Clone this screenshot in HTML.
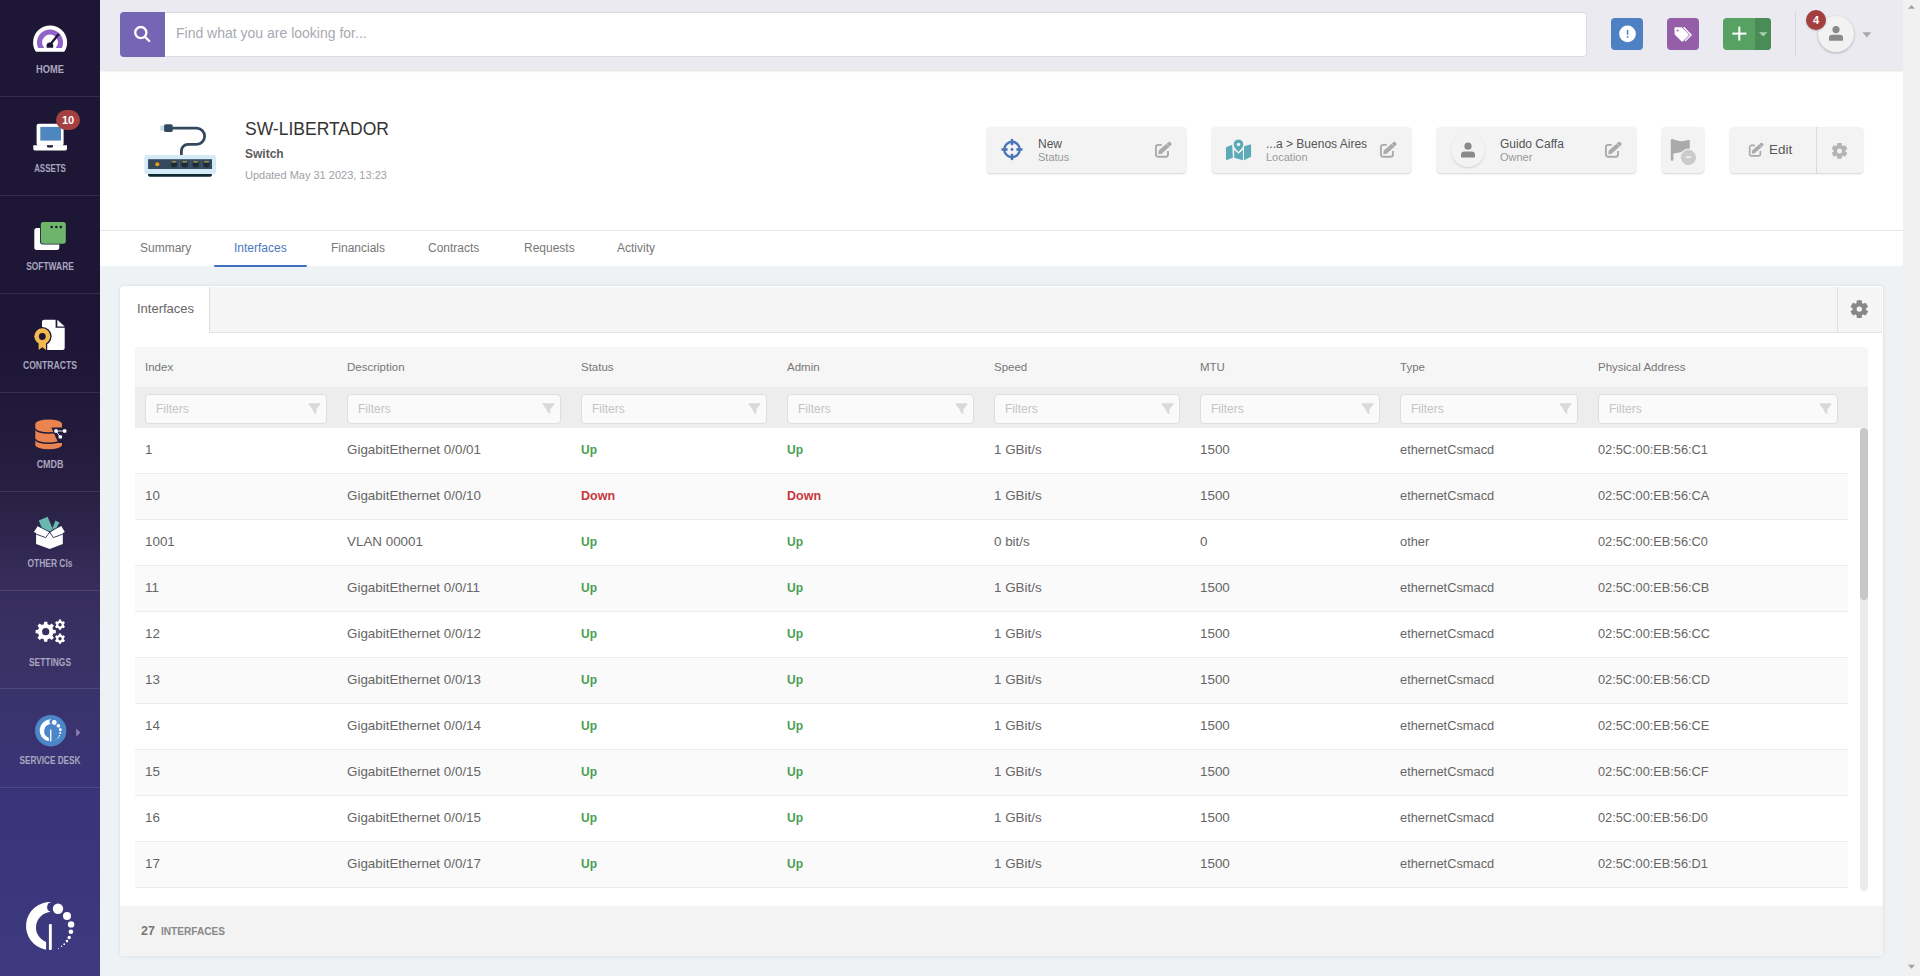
<!DOCTYPE html>
<html><head><meta charset="utf-8"><title>SW-LIBERTADOR</title>
<style>
*{box-sizing:border-box;margin:0;padding:0}
html,body{width:1920px;height:976px;overflow:hidden;background:#eef2f5;font-family:"Liberation Sans",sans-serif;position:relative}
.a{position:absolute}
/* sidebar */
#sb{left:0;top:0;width:100px;height:976px;background:linear-gradient(180deg,#1d1634 0%,#1e1636 36%,#211a3a 43%,#281f42 50%,#362d5c 60%,#3a3266 68%,#3a347a 82%,#3d3a80 100%)}
.sep{left:0;width:100px;height:1px;background:rgba(255,255,255,.1)}
.lbl{left:0;width:100px;text-align:center;font-weight:bold;font-size:10px;color:#a9a6bf;line-height:10px;white-space:nowrap}
/* topbar */
#tb{left:100px;top:0;width:1803px;height:70px;background:#ebeaf0;box-shadow:0 1px 2px rgba(0,0,0,.13);z-index:2}
#vs{left:1903px;top:0;width:17px;height:976px;background:#f1f1f1;z-index:3}
#hdr{left:100px;top:70px;width:1803px;height:160px;background:#fff}
#tabs{left:100px;top:230px;width:1803px;height:36px;background:#fff;border-top:1px solid #e6e6e6}
.tab{top:10px;font-size:12px;color:#777;white-space:nowrap;line-height:14px}
.ic{background:#f3f3f3;border-radius:4px;box-shadow:0 1px 2px rgba(0,0,0,.18)}
.t1{font-size:12px;color:#555;white-space:nowrap;line-height:14px}
.t2{font-size:11px;color:#999;white-space:nowrap;line-height:13px}
/* card */
#card{left:120px;top:286px;width:1763px;height:670px;background:#fff;border-radius:3px;box-shadow:0 0 2px rgba(0,0,0,.2)}
.th{font-size:11.5px;color:#777;white-space:nowrap;line-height:14px}
.flt{height:30px;top:394px;background:#fafafa;border:1px solid #dedede;border-radius:4px}
.flt span{position:absolute;left:10px;top:7px;font-size:12px;color:#c4c4c4}
.flt i{position:absolute;right:5px;top:8px;width:13px;height:11px;line-height:0}
.row{left:135px;width:1713px;height:46px;border-bottom:1px solid #ececec}
.row div{position:absolute;top:14px;font-size:13.4px;color:#666;white-space:nowrap;line-height:16px}
.row .up{color:#4a9e52;font-weight:bold;font-size:12px}
.row .dn{color:#c9363e;font-weight:bold;font-size:12.5px}
</style></head><body>

<!-- SIDEBAR -->
<div id="sb" class="a">
<svg class="a" style="left:0;top:0" width="100" height="976" viewBox="0 0 100 976"><path d="M36.25,50.9 A16.2,16.2 0 1 1 63.95,50.9 Z" fill="#fff" stroke="#fff" stroke-width="1.6" stroke-linejoin="round"/><clipPath id="hc"><rect x="0" y="0" width="100" height="48"/></clipPath><circle cx="50" cy="42.5" r="10.5" fill="none" stroke="#9162c8" stroke-width="5.1" clip-path="url(#hc)"/><line x1="49.6" y1="45.2" x2="58.4" y2="34.6" stroke="#1d1634" stroke-width="2.3" stroke-linecap="round"/><path d="M46.6,47.8 V45.6 A3.3,3.1 0 0 1 53.2,45.6 V47.8 Z" fill="#1d1634"/><rect x="36.6" y="123.7" width="27" height="22" rx="2" fill="#fff"/><rect x="40.3" y="126.9" width="20.7" height="13.7" fill="#4e86c0"/><path d="M33.3,145.2 H67 V148.4 A2.2,2.2 0 0 1 64.8,150.6 H35.5 A2.2,2.2 0 0 1 33.3,148.4 Z" fill="#fff"/><path d="M47,145.2 H53 V146.2 A1.2,1.2 0 0 1 51.8,147.4 H48.2 A1.2,1.2 0 0 1 47,146.2 Z" fill="#1d1634"/><rect x="34.3" y="228" width="25" height="22" rx="2.5" fill="#fff"/><rect x="40" y="221.3" width="26.4" height="23.1" rx="3" fill="#1d1634"/><rect x="40.8" y="222" width="25" height="21.7" rx="2.5" fill="#6cb56a"/><circle cx="51.7" cy="227" r="1.25" fill="#1d1634"/><circle cx="56.3" cy="227" r="1.25" fill="#1d1634"/><circle cx="60.8" cy="227" r="1.25" fill="#1d1634"/><path d="M44,319.7 H55.6 V327.8 H64.7 V348 A2,2 0 0 1 62.7,350 H44 A2,2 0 0 1 42,348 V321.7 A2,2 0 0 1 44,319.7 Z" fill="#fff"/><path d="M57.3,319.7 L64.7,326.4 H57.3 Z" fill="#fff"/><circle cx="42.3" cy="336.3" r="9.3" fill="#1d1634"/><path d="M37.6,340 H47.2 V351 H37.6 Z" fill="#1d1634"/><path d="M38.6,341 H46 V350 L42.3,347.2 L38.6,350 Z" fill="#f2b94f"/><circle cx="42.3" cy="336.3" r="8" fill="#f2b94f"/><circle cx="42.3" cy="336.5" r="3.4" fill="#1d1634"/><path d="M35.3,424 A13.35,4.6 0 0 1 62,424 V444.8 A13.35,4.5 0 0 1 35.3,444.8 Z" fill="#e9834f"/><path d="M35.3,428.8 A13.35,4.2 0 0 0 62,428.8" fill="none" stroke="#221a3c" stroke-width="1.4"/><path d="M35.3,439 A13.35,4.2 0 0 0 62,439" fill="none" stroke="#221a3c" stroke-width="1.4"/><path d="M51.3,427.6 H66 V443 H58.4 Z" fill="#221a3c"/><rect x="54.3" y="429.3" width="3.4" height="3.4" rx="0.8" fill="#fff"/><rect x="63" y="429.3" width="3.4" height="3.4" rx="0.8" fill="#fff"/><rect x="58.6" y="435.2" width="3.4" height="3.4" rx="0.8" fill="#fff"/><path d="M56,431 H64.7 M56,431 L60.3,437" stroke="#fff" stroke-width="0.9"/><path d="M38.8,520.4 L47.6,516.7 L53.2,530 L44,533.5 Z" fill="#6bb8b0"/><path d="M55.4,520.4 L59.5,522.5 L55,531 L52.6,527.8 Z" fill="#6bb8b0"/><path d="M36.1,533 H62.8 V544 L49.7,549.1 L36.1,544 Z" fill="#fff"/><path d="M33.9,532.1 L37.8,526.1 L49.3,532.1 L45.6,537.6 Z" fill="#fff"/><path d="M64.8,532.1 L61.1,525.7 L50.1,532.1 L53.4,537.6 Z" fill="#fff"/><path d="M36.1,534.1 L45.6,537.6 L49.7,532.2 L53.4,537.6 L62.8,534.1" fill="none" stroke="#2b2249" stroke-width="0.9"/><path d="M37.8,525.9 L49.7,531.9 L61.1,525.5" fill="none" stroke="#2b2249" stroke-width="0.8"/><path d="M43.80,624.13 L44.10,621.63 L47.30,621.63 L47.60,624.13 L49.71,625.01 L51.70,623.45 L53.95,625.70 L52.39,627.69 L53.27,629.80 L55.77,630.10 L55.77,633.30 L53.27,633.60 L52.39,635.71 L53.95,637.70 L51.70,639.95 L49.71,638.39 L47.60,639.27 L47.30,641.77 L44.10,641.77 L43.80,639.27 L41.69,638.39 L39.70,639.95 L37.45,637.70 L39.01,635.71 L38.13,633.60 L35.63,633.30 L35.63,630.10 L38.13,629.80 L39.01,627.69 L37.45,625.70 L39.70,623.45 L41.69,625.01Z M42.10,631.70 a3.6,3.6 0 1 0 7.20,0 a3.6,3.6 0 1 0 -7.20,0Z" fill="#fff" fill-rule="evenodd"/><path d="M58.75,621.01 L58.92,619.61 L61.08,619.61 L61.25,621.01 L62.57,621.77 L63.86,621.22 L64.95,623.09 L63.83,623.94 L63.83,625.46 L64.95,626.31 L63.86,628.18 L62.57,627.63 L61.25,628.39 L61.08,629.79 L58.92,629.79 L58.75,628.39 L57.43,627.63 L56.14,628.18 L55.05,626.31 L56.17,625.46 L56.17,623.94 L55.05,623.09 L56.14,621.22 L57.43,621.77Z M58.30,624.70 a1.7,1.7 0 1 0 3.40,0 a1.7,1.7 0 1 0 -3.40,0Z" fill="#fff" fill-rule="evenodd"/><path d="M58.75,635.01 L58.92,633.61 L61.08,633.61 L61.25,635.01 L62.57,635.77 L63.86,635.22 L64.95,637.09 L63.83,637.94 L63.83,639.46 L64.95,640.31 L63.86,642.18 L62.57,641.63 L61.25,642.39 L61.08,643.79 L58.92,643.79 L58.75,642.39 L57.43,641.63 L56.14,642.18 L55.05,640.31 L56.17,639.46 L56.17,637.94 L55.05,637.09 L56.14,635.22 L57.43,635.77Z M58.30,638.70 a1.7,1.7 0 1 0 3.40,0 a1.7,1.7 0 1 0 -3.40,0Z" fill="#fff" fill-rule="evenodd"/><circle cx="50.7" cy="730.7" r="15.7" fill="#4a86c8"/><path d="M51.43,719.39 A11.04,11.04 0 0 0 48.81,741.29 L48.81,737.77 A7.13,7.13 0 0 1 50.92,723.97 A2.35,2.35 0 0 1 51.43,719.39 Z" fill="#fff"/><rect x="50.09" y="729.53" width="1.33" height="11.87" rx="0.46" fill="#fff"/><circle cx="54.28" cy="722.49" r="2.39" fill="#fff"/><circle cx="58.42" cy="725.75" r="1.84" fill="#fff"/><circle cx="60.31" cy="729.66" r="1.47" fill="#fff"/><circle cx="60.21" cy="733.02" r="1.06" fill="#fff"/><circle cx="59.43" cy="735.69" r="0.78" fill="#fff"/><circle cx="58.42" cy="737.35" r="0.60" fill="#fff"/><circle cx="57.13" cy="738.77" r="0.41" fill="#fff"/><circle cx="55.94" cy="739.74" r="0.32" fill="#fff"/><circle cx="54.46" cy="740.75" r="0.23" fill="#fff"/><path d="M76.2,728.4 L80.4,732.6 L76.2,736.8 Z" fill="#8a84b0"/><path d="M51.80,902.07 A24.00,24.00 0 0 0 46.10,949.68 L46.10,942.03 A15.50,15.50 0 0 1 50.70,912.02 A5.10,5.10 0 0 1 51.80,902.07 Z" fill="#fff"/><rect x="48.90" y="924.10" width="2.90" height="25.80" rx="1.00" fill="#fff"/><circle cx="58.00" cy="908.80" r="5.20" fill="#fff"/><circle cx="67.00" cy="915.90" r="4.00" fill="#fff"/><circle cx="71.10" cy="924.40" r="3.20" fill="#fff"/><circle cx="70.90" cy="931.70" r="2.30" fill="#fff"/><circle cx="69.20" cy="937.50" r="1.70" fill="#fff"/><circle cx="67.00" cy="941.10" r="1.30" fill="#fff"/><circle cx="64.20" cy="944.20" r="0.90" fill="#fff"/><circle cx="61.60" cy="946.30" r="0.70" fill="#fff"/><circle cx="58.40" cy="948.50" r="0.50" fill="#fff"/></svg>
<div class="a sep" style="top:96px"></div><div class="a sep" style="top:195px"></div><div class="a sep" style="top:293px"></div><div class="a sep" style="top:392px"></div><div class="a sep" style="top:491px"></div><div class="a sep" style="top:590px"></div><div class="a sep" style="top:688px"></div><div class="a sep" style="top:787px"></div>
<div class="a lbl" style="top:65.0px;transform:scaleX(0.933)">HOME</div><div class="a lbl" style="top:164.0px;transform:scaleX(0.792)">ASSETS</div><div class="a lbl" style="top:262.0px;transform:scaleX(0.841)">SOFTWARE</div><div class="a lbl" style="top:361.0px;transform:scaleX(0.863)">CONTRACTS</div><div class="a lbl" style="top:460.0px;transform:scaleX(0.890)">CMDB</div><div class="a lbl" style="top:559.0px;transform:scaleX(0.844)">OTHER CIs</div><div class="a lbl" style="top:658.0px;transform:scaleX(0.840)">SETTINGS</div><div class="a lbl" style="top:756.0px;transform:scaleX(0.819)">SERVICE DESK</div>
<div class="a" style="left:56px;top:110px;width:24px;height:20px;border-radius:10px;background:#a4403f;color:#fff;font-weight:bold;font-size:11px;line-height:20px;text-align:center">10</div>
</div>

<!-- TOP BAR -->
<div id="tb" class="a">
<div class="a" style="left:20px;top:12px;width:45px;height:45px;background:#7566b5;border-radius:4px 0 0 4px"></div>
<svg class="a" style="left:33px;top:25px" width="19" height="18" viewBox="0 0 19 18"><circle cx="7.8" cy="7.6" r="5.6" fill="none" stroke="#fff" stroke-width="2.3"/><line x1="11.8" y1="11.6" x2="16.2" y2="16" stroke="#fff" stroke-width="2.4" stroke-linecap="round"/></svg>
<div class="a" style="left:65px;top:12px;width:1422px;height:45px;background:#fff;border:1px solid #dcdce0;border-left:none;border-radius:0 4px 4px 0"></div>
<div class="a" style="left:76px;top:25px;font-size:14px;color:#a9a9b1;white-space:nowrap;line-height:16px">Find what you are looking for...</div>
<div class="a" style="left:1511px;top:18px;width:32px;height:32px;background:#4e81c4;border-radius:4px"></div>
<svg class="a" style="left:1511px;top:18px" width="32" height="32" viewBox="0 0 32 32"><circle cx="16.5" cy="15.9" r="8.3" fill="#fff"/><rect x="15.8" y="12" width="1.5" height="4.9" fill="#4e81c4"/><rect x="15.8" y="18" width="1.5" height="1.8" fill="#4e81c4"/></svg>
<div class="a" style="left:1567px;top:18px;width:32px;height:32px;background:#955ea8;border-radius:4px"></div>
<svg class="a" style="left:1567px;top:19px" width="32" height="32" viewBox="0 0 32 32"><path d="M7.4,9.5 A1.2,1.2 0 0 1 8.6,8.3 H14.6 L21.4,15.1 A1.2,1.2 0 0 1 21.4,16.8 L16,22.2 A1.2,1.2 0 0 1 14.3,22.2 L7.7,15.6 Z" fill="#fff"/><circle cx="10.6" cy="11.4" r="1" fill="#955ea8"/><path d="M16.6,8.3 L24,15.9 L18,22" fill="none" stroke="#fff" stroke-width="1.4"/></svg>
<div class="a" style="left:1623px;top:18px;width:48px;height:32px;background:#57a263;border-radius:4px;overflow:hidden"><div class="a" style="left:32px;top:0;width:16px;height:32px;background:#4a8c55"></div></div>
<svg class="a" style="left:1623px;top:18px" width="48" height="32" viewBox="0 0 48 32"><rect x="9.3" y="14.6" width="14" height="2" fill="#fff"/><rect x="15.3" y="8.6" width="2" height="14" fill="#fff"/><path d="M36,14.2 H44.4 L40.2,18.6 Z" fill="#a8d0b0"/></svg>
<div class="a" style="left:1695px;top:12px;width:1px;height:44px;background:#d6d6dc"></div>
<div class="a" style="left:1718px;top:16px;width:36px;height:36px;border-radius:50%;background:#f2f2f2;box-shadow:0 1px 3px rgba(0,0,0,.25)"></div>
<svg class="a" style="left:1718px;top:16px" width="36" height="36" viewBox="0 0 36 36"><circle cx="18" cy="13.6" r="3.6" fill="#8a8a8a"/><path d="M11,22 A3.2,3.2 0 0 1 14.2,18.8 H21.8 A3.2,3.2 0 0 1 25,22 V24.8 H11 Z" fill="#8a8a8a"/></svg>
<div class="a" style="left:1706px;top:10px;width:20px;height:20px;border-radius:50%;background:#a53f3f;color:#fff;font-weight:bold;font-size:11px;line-height:20px;text-align:center;box-shadow:0 1px 2px rgba(0,0,0,.2)">4</div>
<svg class="a" style="left:1760px;top:30px" width="14" height="10" viewBox="0 0 14 10"><path d="M2.5,2.2 H11.3 L6.9,7.4 Z" fill="#aaa"/></svg>
</div>
<div id="vs" class="a"><svg class="a" style="left:0;top:0" width="17" height="976" viewBox="0 0 17 976"><path d="M4.9,8.8 L8.5,4.9 L12,8.8 Z" fill="#a3a3a3"/><path d="M4.9,964.8 L12,964.8 L8.5,968.8 Z" fill="#a3a3a3"/></svg></div>

<!-- HEADER -->
<div id="hdr" class="a">
<svg class="a" style="left:35px;top:40px" width="90" height="70" viewBox="135 110 90 70">
<path d="M172,128.2 H196.5 A8.1,8.1 0 0 1 196.5,144.4 H188 A6.6,6.6 0 0 0 181.4,151 V156" fill="none" stroke="#34495e" stroke-width="2.8"/>
<rect x="160.3" y="125.6" width="5" height="5" fill="#c2dcea"/>
<rect x="164.1" y="124.3" width="8.6" height="7.8" rx="1.5" fill="#34495e"/>
<rect x="148" y="172.5" width="64" height="4.3" rx="2" fill="#0f2a33"/>
<rect x="144.4" y="155.1" width="71.7" height="18.8" rx="2.5" fill="#d4ebf7"/>
<rect x="148.1" y="159.2" width="63.9" height="9.8" fill="#34495e"/>
<circle cx="157.3" cy="164.3" r="2" fill="#f0a30a"/>
<g fill="#1c2b36"><path d="M171,161.3 H177 V165.8 L175.5,167.3 H172.5 L171,165.8 Z"/><path d="M181.7,161.3 H187.7 V165.8 L186.2,167.3 H183.2 L181.7,165.8 Z"/><path d="M192.7,161.3 H198.7 V165.8 L197.2,167.3 H194.2 L192.7,165.8 Z"/><path d="M203.5,161.3 H209.5 V165.8 L208,167.3 H205 L203.5,165.8 Z"/></g>
<g fill="#b5a45a"><rect x="171.6" y="161.2" width="4.8" height="1.3"/><rect x="182.3" y="161.2" width="4.8" height="1.3"/><rect x="193.3" y="161.2" width="4.8" height="1.3"/><rect x="204.1" y="161.2" width="4.8" height="1.3"/></g>
<g fill="#4d6275"><rect x="179.2" y="160.5" width="0.7" height="8"/><rect x="190.2" y="160.5" width="0.7" height="8"/><rect x="201" y="160.5" width="0.7" height="8"/></g>
</svg>
<div class="a" style="left:145px;top:49px;font-size:17.5px;color:#333;white-space:nowrap;line-height:20px">SW-LIBERTADOR</div>
<div class="a" style="left:145px;top:77px;font-size:12px;font-weight:bold;color:#5c5c5c;white-space:nowrap;line-height:14px">Switch</div>
<div class="a" style="left:145px;top:99px;font-size:11px;color:#a0a0a8;white-space:nowrap;line-height:13px">Updated May 31 2023, 13:23</div>

<div class="a ic" style="left:887px;top:57px;width:199px;height:46px"></div>
<svg class="a" style="left:900px;top:67px" width="24" height="24" viewBox="0 0 24 24"><circle cx="12" cy="12.5" r="7.7" fill="none" stroke="#4d76b8" stroke-width="2.4"/><g stroke="#4d76b8" stroke-width="2.5"><line x1="12" y1="1.9" x2="12" y2="8.2"/><line x1="12" y1="16.8" x2="12" y2="23.1"/><line x1="1.4" y1="12.5" x2="7.7" y2="12.5"/><line x1="16.3" y1="12.5" x2="22.6" y2="12.5"/></g><circle cx="12" cy="12.5" r="1.4" fill="#4d76b8"/></svg>
<div class="a t1" style="left:938px;top:67px">New</div>
<div class="a t2" style="left:938px;top:81px">Status</div>
<svg class="a" style="left:1054px;top:71px" width="18" height="17" viewBox="0 0 18 17"><path d="M7.8,3.9 H4.1 A2.2,2.2 0 0 0 1.9,6.1 V13.6 A2.2,2.2 0 0 0 4.1,15.8 H11.8 A2.2,2.2 0 0 0 14,13.6 V10" fill="none" stroke="#aaa" stroke-width="1.9"/><path d="M4.3,13.2 L4.77,9.6 L13.97,1.4 A2.15,2.15 0 0 1 16.83,4.6 L7.63,12.8 Z" fill="#aaa"/><line x1="12.5" y1="2.4" x2="15.6" y2="5.96" stroke="#f3f3f3" stroke-width="0.5"/></svg>
<div class="a ic" style="left:1112px;top:57px;width:199px;height:46px"></div>
<svg class="a" style="left:1125px;top:68px" width="28" height="24" viewBox="0 0 28 24"><g fill="#5aaab8"><path d="M1,9.2 L7.2,6.8 L7.9,19.8 L1,22.2 Z"/><path d="M9.2,12 L13.5,15.7 L17.9,12 V22.2 L9.2,19.7 Z"/><path d="M19,8.3 L26.1,6.2 V18.8 L19,22.2 Z"/></g><path d="M13.5,0.9 A5.4,5.4 0 0 1 18.9,6.3 C18.9,9.3 15.8,12.6 13.5,14.6 C11.2,12.6 8.1,9.3 8.1,6.3 A5.4,5.4 0 0 1 13.5,0.9 Z" fill="#5aaab8" stroke="#f3f3f3" stroke-width="1.1"/><circle cx="13.5" cy="6.4" r="1.7" fill="#f3f3f3"/></svg>
<div class="a t1" style="left:1166px;top:67px">...a &gt; Buenos Aires</div>
<div class="a t2" style="left:1166px;top:81px">Location</div>
<svg class="a" style="left:1279px;top:71px" width="18" height="17" viewBox="0 0 18 17"><path d="M7.8,3.9 H4.1 A2.2,2.2 0 0 0 1.9,6.1 V13.6 A2.2,2.2 0 0 0 4.1,15.8 H11.8 A2.2,2.2 0 0 0 14,13.6 V10" fill="none" stroke="#aaa" stroke-width="1.9"/><path d="M4.3,13.2 L4.77,9.6 L13.97,1.4 A2.15,2.15 0 0 1 16.83,4.6 L7.63,12.8 Z" fill="#aaa"/><line x1="12.5" y1="2.4" x2="15.6" y2="5.96" stroke="#f3f3f3" stroke-width="0.5"/></svg>
<div class="a ic" style="left:1337px;top:57px;width:199px;height:46px"></div>
<div class="a" style="left:1351px;top:63px;width:34px;height:34px;border-radius:50%;background:#f3f3f3;box-shadow:0 1px 2px rgba(0,0,0,.15)"></div>
<svg class="a" style="left:1351px;top:63px" width="34" height="34" viewBox="0 0 34 34"><circle cx="17" cy="13.2" r="3.6" fill="#8a8a8a"/><path d="M10,21.8 A3.4,3.4 0 0 1 13.4,18.4 H20.6 A3.4,3.4 0 0 1 24,21.8 V24.4 H10 Z" fill="#8a8a8a"/></svg>
<div class="a t1" style="left:1400px;top:67px">Guido Caffa</div>
<div class="a t2" style="left:1400px;top:81px">Owner</div>
<svg class="a" style="left:1504px;top:71px" width="18" height="17" viewBox="0 0 18 17"><path d="M7.8,3.9 H4.1 A2.2,2.2 0 0 0 1.9,6.1 V13.6 A2.2,2.2 0 0 0 4.1,15.8 H11.8 A2.2,2.2 0 0 0 14,13.6 V10" fill="none" stroke="#aaa" stroke-width="1.9"/><path d="M4.3,13.2 L4.77,9.6 L13.97,1.4 A2.15,2.15 0 0 1 16.83,4.6 L7.63,12.8 Z" fill="#aaa"/><line x1="12.5" y1="2.4" x2="15.6" y2="5.96" stroke="#f3f3f3" stroke-width="0.5"/></svg>
<div class="a ic" style="left:1562px;top:57px;width:42px;height:46px"></div>
<svg class="a" style="left:1562px;top:57px" width="42" height="46" viewBox="0 0 42 46"><path d="M9.9,11.9 A1.3,1.3 0 0 1 11.4,12.6 C14.5,13.2 16.5,14.4 19.5,14.2 C22.5,14 25,13 27.8,13 V23.2 C25,23.4 22.5,24.4 19.5,25 C16.5,25.6 14.5,26.2 11.4,26.6 V32.6 A1.3,1.3 0 0 1 8.8,32.6 V13.2 A1.3,1.3 0 0 1 9.9,11.9 Z" fill="#aaa"/><circle cx="26.4" cy="30.3" r="8.7" fill="#f3f3f3"/><circle cx="26.4" cy="30.3" r="7.6" fill="#cbcbcb"/><rect x="23.6" y="29.6" width="5.6" height="1.5" rx="0.6" fill="#f3f3f3"/></svg>
<div class="a ic" style="left:1630px;top:57px;width:133px;height:46px"></div>
<div class="a" style="left:1716px;top:57px;width:1px;height:46px;background:#dadada"></div>
<svg class="a" style="left:1648px;top:72px" width="15.9" height="15" viewBox="0 0 18 17"><path d="M7.8,3.9 H4.1 A2.2,2.2 0 0 0 1.9,6.1 V13.6 A2.2,2.2 0 0 0 4.1,15.8 H11.8 A2.2,2.2 0 0 0 14,13.6 V10" fill="none" stroke="#aaa" stroke-width="1.9"/><path d="M4.3,13.2 L4.77,9.6 L13.97,1.4 A2.15,2.15 0 0 1 16.83,4.6 L7.63,12.8 Z" fill="#aaa"/><line x1="12.5" y1="2.4" x2="15.6" y2="5.96" stroke="#f3f3f3" stroke-width="0.5"/></svg>
<div class="a" style="left:1669px;top:72px;font-size:13.5px;color:#5a5a5a;white-space:nowrap;line-height:16px">Edit</div>
<svg class="a" style="left:1729px;top:71px" width="20" height="20" viewBox="0 0 20 20"><path d="M7.98,4.57 L8.40,2.08 L12.60,2.08 L13.02,4.57 A5.9,5.9 0 0 1 13.86,5.05 L16.22,4.17 L18.32,7.81 L16.38,9.42 A5.9,5.9 0 0 1 16.38,10.38 L18.32,11.99 L16.22,15.63 L13.86,14.75 A5.9,5.9 0 0 1 13.02,15.23 L12.60,17.72 L8.40,17.72 L7.98,15.23 A5.9,5.9 0 0 1 7.14,14.75 L4.78,15.63 L2.68,11.99 L4.62,10.38 A5.9,5.9 0 0 1 4.62,9.42 L2.68,7.81 L4.78,4.17 L7.14,5.05 A5.9,5.9 0 0 1 7.98,4.57Z M8.00,9.90 a2.5,2.5 0 1 0 5.00,0 a2.5,2.5 0 1 0 -5.00,0Z" fill="#b4b4b4" fill-rule="evenodd"/></svg>
</div>
<div id="tabs" class="a">
<div class="a tab" style="left:40px">Summary</div>
<div class="a tab" style="left:134px;color:#4a78c0">Interfaces</div>
<div class="a" style="left:114px;top:34px;width:93px;height:2px;border-radius:1px;background:#3f73c0"></div>
<div class="a tab" style="left:231px">Financials</div>
<div class="a tab" style="left:328px">Contracts</div>
<div class="a tab" style="left:424px">Requests</div>
<div class="a tab" style="left:517px">Activity</div>
</div>

<!-- CARD -->
<div class="a" style="left:120px;top:286px;width:1763px;height:670px;background:#fff;border-radius:3px;box-shadow:0 0 1px rgba(0,0,0,.22),0 0 5px rgba(0,0,0,.06)"></div>
<div class="a" style="left:209px;top:287px;width:1673px;height:46px;background:#f5f5f5;border-left:1px solid #dedede;border-bottom:1px solid #e2e2e2;border-radius:0 3px 0 0"></div>
<div class="a" style="left:1837px;top:287px;width:1px;height:45px;background:#e0e0e0"></div>
<div class="a" style="left:137px;top:301px;font-size:13px;color:#666;white-space:nowrap;line-height:15px">Interfaces</div>
<svg class="a" style="left:1849px;top:299px" width="20" height="20" viewBox="0 0 20 20"><path d="M7.42,4.16 L7.90,1.32 L12.70,1.32 L13.18,4.16 A6.6,6.6 0 0 1 14.00,4.64 L16.70,3.63 L19.10,7.79 L16.88,9.62 A6.6,6.6 0 0 1 16.88,10.58 L19.10,12.41 L16.70,16.57 L14.00,15.56 A6.6,6.6 0 0 1 13.18,16.04 L12.70,18.88 L7.90,18.88 L7.42,16.04 A6.6,6.6 0 0 1 6.60,15.56 L3.90,16.57 L1.50,12.41 L3.72,10.58 A6.6,6.6 0 0 1 3.72,9.62 L1.50,7.79 L3.90,3.63 L6.60,4.64 A6.6,6.6 0 0 1 7.42,4.16Z M7.60,10.10 a2.7,2.7 0 1 0 5.40,0 a2.7,2.7 0 1 0 -5.40,0Z" fill="#888" fill-rule="evenodd"/></svg>
<div class="a" style="left:135px;top:347px;width:1733px;height:40px;background:#f6f6f6;border-radius:3px 3px 0 0"></div>
<div class="a" style="left:135px;top:387px;width:1733px;height:41px;background:#ededed"></div>
<div class="a th" style="left:145px;top:360px">Index</div><div class="a th" style="left:347px;top:360px">Description</div><div class="a th" style="left:581px;top:360px">Status</div><div class="a th" style="left:787px;top:360px">Admin</div><div class="a th" style="left:994px;top:360px">Speed</div><div class="a th" style="left:1200px;top:360px">MTU</div><div class="a th" style="left:1400px;top:360px">Type</div><div class="a th" style="left:1598px;top:360px">Physical Address</div>
<div class="a flt" style="left:145px;width:182px"><span>Filters</span><i><svg width="13" height="11" viewBox="0 0 13 11"><path d="M1.2,0.2 H11.6 A0.8,0.8 0 0 1 12.2,1.5 L8.4,6.2 V10 A0.8,0.8 0 0 1 7.2,10.7 L5.2,8.2 A1,1 0 0 1 4.6,7.5 V6.2 L0.6,1.5 A0.8,0.8 0 0 1 1.2,0.2 Z" fill="#d9d9d9"/></svg></i></div><div class="a flt" style="left:347px;width:214px"><span>Filters</span><i><svg width="13" height="11" viewBox="0 0 13 11"><path d="M1.2,0.2 H11.6 A0.8,0.8 0 0 1 12.2,1.5 L8.4,6.2 V10 A0.8,0.8 0 0 1 7.2,10.7 L5.2,8.2 A1,1 0 0 1 4.6,7.5 V6.2 L0.6,1.5 A0.8,0.8 0 0 1 1.2,0.2 Z" fill="#d9d9d9"/></svg></i></div><div class="a flt" style="left:581px;width:186px"><span>Filters</span><i><svg width="13" height="11" viewBox="0 0 13 11"><path d="M1.2,0.2 H11.6 A0.8,0.8 0 0 1 12.2,1.5 L8.4,6.2 V10 A0.8,0.8 0 0 1 7.2,10.7 L5.2,8.2 A1,1 0 0 1 4.6,7.5 V6.2 L0.6,1.5 A0.8,0.8 0 0 1 1.2,0.2 Z" fill="#d9d9d9"/></svg></i></div><div class="a flt" style="left:787px;width:187px"><span>Filters</span><i><svg width="13" height="11" viewBox="0 0 13 11"><path d="M1.2,0.2 H11.6 A0.8,0.8 0 0 1 12.2,1.5 L8.4,6.2 V10 A0.8,0.8 0 0 1 7.2,10.7 L5.2,8.2 A1,1 0 0 1 4.6,7.5 V6.2 L0.6,1.5 A0.8,0.8 0 0 1 1.2,0.2 Z" fill="#d9d9d9"/></svg></i></div><div class="a flt" style="left:994px;width:186px"><span>Filters</span><i><svg width="13" height="11" viewBox="0 0 13 11"><path d="M1.2,0.2 H11.6 A0.8,0.8 0 0 1 12.2,1.5 L8.4,6.2 V10 A0.8,0.8 0 0 1 7.2,10.7 L5.2,8.2 A1,1 0 0 1 4.6,7.5 V6.2 L0.6,1.5 A0.8,0.8 0 0 1 1.2,0.2 Z" fill="#d9d9d9"/></svg></i></div><div class="a flt" style="left:1200px;width:180px"><span>Filters</span><i><svg width="13" height="11" viewBox="0 0 13 11"><path d="M1.2,0.2 H11.6 A0.8,0.8 0 0 1 12.2,1.5 L8.4,6.2 V10 A0.8,0.8 0 0 1 7.2,10.7 L5.2,8.2 A1,1 0 0 1 4.6,7.5 V6.2 L0.6,1.5 A0.8,0.8 0 0 1 1.2,0.2 Z" fill="#d9d9d9"/></svg></i></div><div class="a flt" style="left:1400px;width:178px"><span>Filters</span><i><svg width="13" height="11" viewBox="0 0 13 11"><path d="M1.2,0.2 H11.6 A0.8,0.8 0 0 1 12.2,1.5 L8.4,6.2 V10 A0.8,0.8 0 0 1 7.2,10.7 L5.2,8.2 A1,1 0 0 1 4.6,7.5 V6.2 L0.6,1.5 A0.8,0.8 0 0 1 1.2,0.2 Z" fill="#d9d9d9"/></svg></i></div><div class="a flt" style="left:1598px;width:240px"><span>Filters</span><i><svg width="13" height="11" viewBox="0 0 13 11"><path d="M1.2,0.2 H11.6 A0.8,0.8 0 0 1 12.2,1.5 L8.4,6.2 V10 A0.8,0.8 0 0 1 7.2,10.7 L5.2,8.2 A1,1 0 0 1 4.6,7.5 V6.2 L0.6,1.5 A0.8,0.8 0 0 1 1.2,0.2 Z" fill="#d9d9d9"/></svg></i></div>
<div class="a row" style="top:428px;background:#fff"><div style="left:10px">1</div><div style="left:212px">GigabitEthernet 0/0/01</div><div class="up" style="left:446px">Up</div><div class="up" style="left:652px">Up</div><div style="left:859px">1 GBit/s</div><div style="left:1065px">1500</div><div style="left:1265px;font-size:12.85px">ethernetCsmacd</div><div style="left:1463px;font-size:12.75px">02:5C:00:EB:56:C1</div></div>
<div class="a row" style="top:474px;background:#fafafa"><div style="left:10px">10</div><div style="left:212px">GigabitEthernet 0/0/10</div><div class="dn" style="left:446px">Down</div><div class="dn" style="left:652px">Down</div><div style="left:859px">1 GBit/s</div><div style="left:1065px">1500</div><div style="left:1265px;font-size:12.85px">ethernetCsmacd</div><div style="left:1463px;font-size:12.75px">02:5C:00:EB:56:CA</div></div>
<div class="a row" style="top:520px;background:#fff"><div style="left:10px">1001</div><div style="left:212px">VLAN 00001</div><div class="up" style="left:446px">Up</div><div class="up" style="left:652px">Up</div><div style="left:859px">0 bit/s</div><div style="left:1065px">0</div><div style="left:1265px;font-size:12.85px">other</div><div style="left:1463px;font-size:12.75px">02:5C:00:EB:56:C0</div></div>
<div class="a row" style="top:566px;background:#fafafa"><div style="left:10px">11</div><div style="left:212px">GigabitEthernet 0/0/11</div><div class="up" style="left:446px">Up</div><div class="up" style="left:652px">Up</div><div style="left:859px">1 GBit/s</div><div style="left:1065px">1500</div><div style="left:1265px;font-size:12.85px">ethernetCsmacd</div><div style="left:1463px;font-size:12.75px">02:5C:00:EB:56:CB</div></div>
<div class="a row" style="top:612px;background:#fff"><div style="left:10px">12</div><div style="left:212px">GigabitEthernet 0/0/12</div><div class="up" style="left:446px">Up</div><div class="up" style="left:652px">Up</div><div style="left:859px">1 GBit/s</div><div style="left:1065px">1500</div><div style="left:1265px;font-size:12.85px">ethernetCsmacd</div><div style="left:1463px;font-size:12.75px">02:5C:00:EB:56:CC</div></div>
<div class="a row" style="top:658px;background:#fafafa"><div style="left:10px">13</div><div style="left:212px">GigabitEthernet 0/0/13</div><div class="up" style="left:446px">Up</div><div class="up" style="left:652px">Up</div><div style="left:859px">1 GBit/s</div><div style="left:1065px">1500</div><div style="left:1265px;font-size:12.85px">ethernetCsmacd</div><div style="left:1463px;font-size:12.75px">02:5C:00:EB:56:CD</div></div>
<div class="a row" style="top:704px;background:#fff"><div style="left:10px">14</div><div style="left:212px">GigabitEthernet 0/0/14</div><div class="up" style="left:446px">Up</div><div class="up" style="left:652px">Up</div><div style="left:859px">1 GBit/s</div><div style="left:1065px">1500</div><div style="left:1265px;font-size:12.85px">ethernetCsmacd</div><div style="left:1463px;font-size:12.75px">02:5C:00:EB:56:CE</div></div>
<div class="a row" style="top:750px;background:#fafafa"><div style="left:10px">15</div><div style="left:212px">GigabitEthernet 0/0/15</div><div class="up" style="left:446px">Up</div><div class="up" style="left:652px">Up</div><div style="left:859px">1 GBit/s</div><div style="left:1065px">1500</div><div style="left:1265px;font-size:12.85px">ethernetCsmacd</div><div style="left:1463px;font-size:12.75px">02:5C:00:EB:56:CF</div></div>
<div class="a row" style="top:796px;background:#fff"><div style="left:10px">16</div><div style="left:212px">GigabitEthernet 0/0/15</div><div class="up" style="left:446px">Up</div><div class="up" style="left:652px">Up</div><div style="left:859px">1 GBit/s</div><div style="left:1065px">1500</div><div style="left:1265px;font-size:12.85px">ethernetCsmacd</div><div style="left:1463px;font-size:12.75px">02:5C:00:EB:56:D0</div></div>
<div class="a row" style="top:842px;background:#fafafa"><div style="left:10px">17</div><div style="left:212px">GigabitEthernet 0/0/17</div><div class="up" style="left:446px">Up</div><div class="up" style="left:652px">Up</div><div style="left:859px">1 GBit/s</div><div style="left:1065px">1500</div><div style="left:1265px;font-size:12.85px">ethernetCsmacd</div><div style="left:1463px;font-size:12.75px">02:5C:00:EB:56:D1</div></div>
<div class="a" style="left:1860px;top:428px;width:8px;height:463px;background:#ececec;border-radius:4px"></div>
<div class="a" style="left:1860px;top:428px;width:8px;height:172px;background:#c8c8c8;border-radius:4px"></div>
<div class="a" style="left:120px;top:906px;width:1763px;height:50px;background:#f3f3f3;border-radius:0 0 3px 3px"></div>
<div class="a" style="left:141px;top:924px;font-size:12.4px;font-weight:bold;color:#777;white-space:nowrap;line-height:14px">27</div>
<div class="a" style="left:161px;top:925px;font-size:10.1px;font-weight:bold;color:#888;white-space:nowrap;line-height:13px">INTERFACES</div>


</body></html>
